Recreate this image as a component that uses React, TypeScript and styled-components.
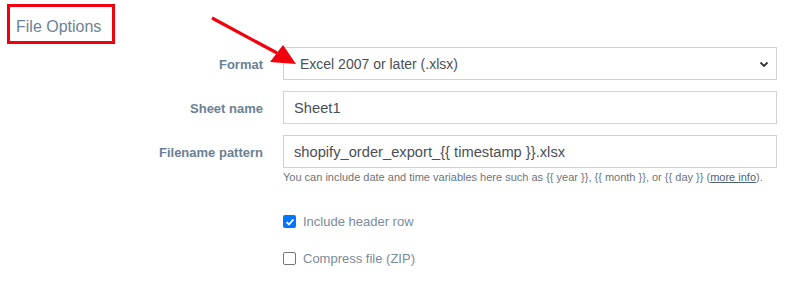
import styled, { createGlobalStyle } from "styled-components";

const GlobalStyle = createGlobalStyle`
  body {
    margin: 0;
    background: #ffffff;
    font-family: "Liberation Sans", Arial, sans-serif;
  }
`;

const Page = styled.div`
  position: relative;
  width: 795px;
  height: 287px;
  padding: 4px 18px 0 7px;
  box-sizing: border-box;
`;

const HeaderBox = styled.div`
  width: 108px;
  height: 40px;
  box-sizing: border-box;
  border: 3px solid #f0000c;
  display: flex;
  align-items: center;
  padding: 6px 0 0 6px;
`;

const Heading = styled.h3`
  margin: 0;
  font-size: 16px;
  font-weight: 400;
  color: #6c8297;
`;

const Form = styled.div`
  display: grid;
  grid-template-columns: 256px 1fr;
  column-gap: 20px;
  margin-top: 3px;
`;

const Label = styled.label`
  font-size: 13px;
  font-weight: 700;
  color: #6b7f95;
  text-align: right;
  height: 33px;
  line-height: 35px;
`;

const Field = styled.div<{ $gap?: number }>`
  margin-bottom: ${(p) => p.$gap ?? 11}px;
`;

const Select = styled.div`
  height: 33px;
  box-sizing: border-box;
  border: 1px solid #cfd3d8;
  display: flex;
  align-items: center;
  justify-content: space-between;
  padding: 0 6px 0 16px;
  font-size: 14px;
  color: #4a4f55;
`;

const Input = styled.div`
  height: 33px;
  box-sizing: border-box;
  border: 1px solid #cfd3d8;
  display: flex;
  align-items: center;
  padding: 0 10px;
  font-size: 14.7px;
  color: #4a4f55;
  white-space: pre;
`;

const Help = styled.div`
  margin-top: 3px;
  font-size: 11px;
  color: #6c757d;
  a {
    color: #4f6377;
    text-decoration: underline;
  }
`;

const Spacer = styled.div``;

const CheckRow = styled.label<{ $top: number }>`
  display: flex;
  align-items: center;
  gap: 7px;
  margin-top: ${(p) => p.$top}px;
  font-size: 13px;
  color: #7b8a9b;
`;

const Box = styled.span<{ $checked?: boolean }>`
  width: 13px;
  height: 13px;
  box-sizing: border-box;
  border-radius: 2px;
  border: ${(p) => (p.$checked ? "none" : "1px solid #767676")};
  background: ${(p) => (p.$checked ? "#0075ff" : "#ffffff")};
  display: flex;
  align-items: center;
  justify-content: center;
`;

const Arrow = styled.svg`
  position: absolute;
  left: 0;
  top: 0;
  pointer-events: none;
`;

function Chevron() {
  return (
    <svg width="12" height="12" viewBox="0 0 12 12">
      <path d="M2.5 4.5 L6 8 L9.5 4.5" fill="none" stroke="#333" strokeWidth="1.8" />
    </svg>
  );
}

function Check() {
  return (
    <svg width="10" height="10" viewBox="0 0 10 10">
      <path d="M1.6 5.2 L4 7.5 L8.4 2.4" fill="none" stroke="#fff" strokeWidth="1.8" />
    </svg>
  );
}

export default function App() {
  return (
    <>
      <GlobalStyle />
      <Page>
        <HeaderBox>
          <Heading>File Options</Heading>
        </HeaderBox>
        <Form>
          <Label>Format</Label>
          <Field>
            <Select>
              <span>Excel 2007 or later (.xlsx)</span>
              <Chevron />
            </Select>
          </Field>
          <Label>Sheet name</Label>
          <Field>
            <Input>Sheet1</Input>
          </Field>
          <Label>Filename pattern</Label>
          <Field $gap={0}>
            <Input>shopify_order_export_{"{{ timestamp }}"}.xlsx</Input>
            <Help>
              You can include date and time variables here such as {"{{ year }}"}, {"{{ month }}"}, or{" "}
              {"{{ day }}"} (<a>more info</a>).
            </Help>
          </Field>
          <Spacer />
          <div>
            <CheckRow $top={31}>
              <Box $checked>
                <Check />
              </Box>
              Include header row
            </CheckRow>
            <CheckRow $top={22}>
              <Box />
              Compress file (ZIP)
            </CheckRow>
          </div>
        </Form>
        <Arrow width="795" height="287" viewBox="0 0 795 287">
          <line x1="212" y1="18" x2="277" y2="53" stroke="#f0000c" strokeWidth="3.2" />
          <polygon points="283,45 296,64 270,62" fill="#f0000c" />
        </Arrow>
      </Page>
    </>
  );
}
